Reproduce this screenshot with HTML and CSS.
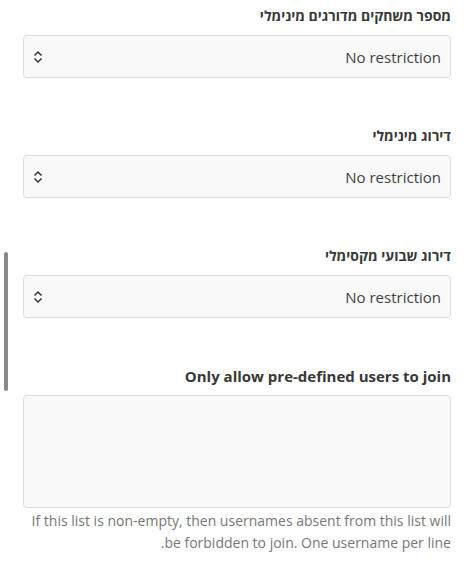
FILE: index.html
```html
<!DOCTYPE html>
<html lang="he" dir="rtl">
<head>
    <meta charset="UTF-8">
    <meta name="viewport" content="width=device-width, initial-scale=1.0">
    <title>הגדרות</title>
    <link rel="stylesheet" href="styles.css">
</head>
<body>

<div class="scroll-thumb"></div>

<div class="settings">
    <div class="field">
        <label class="field-label">מספר משחקים מדורגים מינימלי</label>
        <div class="select">
            <span class="select-value">No restriction</span>
            <svg class="select-icon" width="12" height="14" viewBox="0 0 12 14">
                <polyline points="2.5,5.5 6,2 9.5,5.5" fill="none" stroke="#333" stroke-width="1.5"/>
                <polyline points="2.5,8.5 6,12 9.5,8.5" fill="none" stroke="#333" stroke-width="1.5"/>
            </svg>
        </div>
    </div>

    <div class="field">
        <label class="field-label">דירוג מינימלי</label>
        <div class="select">
            <span class="select-value">No restriction</span>
            <svg class="select-icon" width="12" height="14" viewBox="0 0 12 14">
                <polyline points="2.5,5.5 6,2 9.5,5.5" fill="none" stroke="#333" stroke-width="1.5"/>
                <polyline points="2.5,8.5 6,12 9.5,8.5" fill="none" stroke="#333" stroke-width="1.5"/>
            </svg>
        </div>
    </div>

    <div class="field">
        <label class="field-label">דירוג שבועי מקסימלי</label>
        <div class="select">
            <span class="select-value">No restriction</span>
            <svg class="select-icon" width="12" height="14" viewBox="0 0 12 14">
                <polyline points="2.5,5.5 6,2 9.5,5.5" fill="none" stroke="#333" stroke-width="1.5"/>
                <polyline points="2.5,8.5 6,12 9.5,8.5" fill="none" stroke="#333" stroke-width="1.5"/>
            </svg>
        </div>
    </div>

    <div class="field">
        <label class="field-label label-en">Only allow pre-defined users to join</label>
        <textarea class="textarea"></textarea>
        <p class="help">If this list is non-empty, then usernames absent from this list will be forbidden to join. One username per line.</p>
    </div>
</div>

</body>
</html>
```

FILE: styles.css
```css
body {
    font-family: "Open Sans", "DejaVu Sans", sans-serif;
    background-color: #fff;
    color: #333;
    margin: 0;
}

.scroll-thumb {
    position: absolute;
    left: 4px;
    top: 252px;
    width: 4px;
    height: 139px;
    border-radius: 2px;
    background-color: #8a8a8a;
}

.settings {
    padding: 6px 23px 0 23px;
}

.field {
    margin-bottom: 48px;
}

.field-label {
    display: block;
    font-size: 14px;
    font-weight: 700;
    line-height: 20px;
    color: #383838;
    margin-bottom: 9px;
}

.label-en {
    font-size: 15px;
}

.select {
    display: flex;
    align-items: center;
    justify-content: space-between;
    height: 41px;
    padding: 0 9px 0 8px;
    border: 1px solid #dcdcdc;
    border-radius: 4px;
    background-color: #f9f9f9;
}

.select-value {
    font-size: 15px;
    color: #3f3f3f;
}

.select-icon {
    display: block;
}

.textarea {
    display: block;
    box-sizing: border-box;
    width: 100%;
    height: 113px;
    margin: 0;
    border: 1px solid #dcdcdc;
    border-radius: 4px;
    background-color: #f9f9f9;
    resize: none;
}

.help {
    margin: 2px 0 0 0;
    font-size: 14px;
    line-height: 22px;
    color: #777;
}
```
